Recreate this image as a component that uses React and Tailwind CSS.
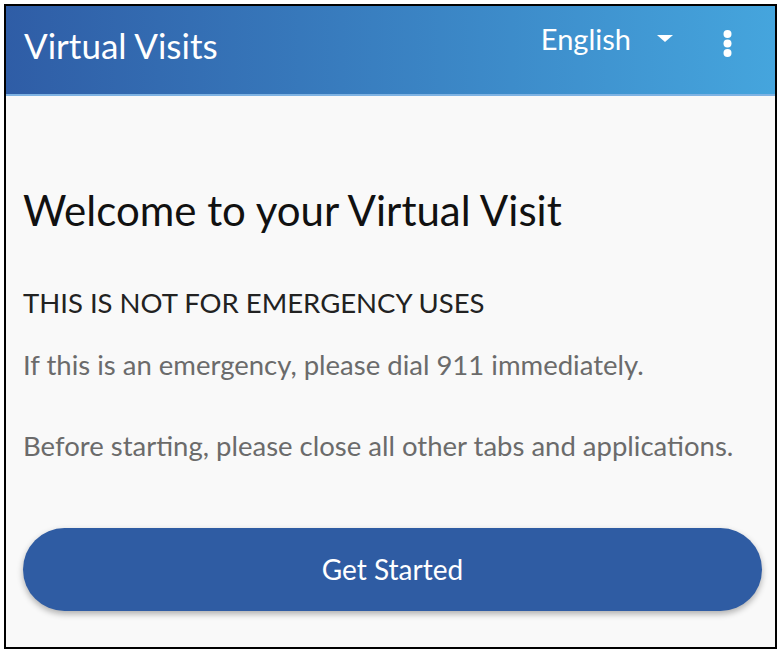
export default function App() {
    return (
        <div className="w-[782px] h-[654px] bg-white p-[4px]" style={{ fontFamily: 'Lato, "Open Sans", sans-serif' }}>
            <div className="w-[773px] h-[645px] border-2 border-black bg-[#f9f9f9] flex flex-col">
                <header className="h-[90px] flex items-start justify-between pl-[18px] pr-[43px] bg-gradient-to-r from-[#2f5da6] to-[#45a5dd] border-b-2 border-[#7fb3e3]">
                    <h1 className="mt-[22px] text-[35px] leading-none text-white">Virtual Visits</h1>
                    <div className="flex items-start text-white">
                        <span className="mt-[18px] text-[29px] leading-none">English</span>
                        <svg width="16" height="7" viewBox="0 0 16 7" className="mt-[29px] ml-[26px]">
                            <path d="M0 0 L16 0 L8 7 Z" fill="white" />
                        </svg>
                        <svg width="9" height="27" viewBox="0 0 9 27" className="mt-[24px] ml-[50px]">
                            <circle cx="4.5" cy="4" r="4" fill="white" />
                            <circle cx="4.5" cy="13.5" r="4" fill="white" />
                            <circle cx="4.5" cy="23" r="4" fill="white" />
                        </svg>
                    </div>
                </header>

                <main className="flex-1 px-[17px] pt-[93px]">
                    <h2 className="text-[42px] text-[#111] leading-none">Welcome to your Virtual Visit</h2>
                    <p className="mt-[58px] text-[27.5px] text-[#222] leading-none">THIS IS NOT FOR EMERGENCY USES</p>
                    <p className="mt-[34px] text-[27.5px] text-[#6b6b6b] leading-none">If this is an emergency, please dial 911 immediately.</p>
                    <p className="mt-[54px] text-[27.5px] text-[#6b6b6b] leading-none">Before starting, please close all other tabs and applications.</p>
                    <button className="mt-[68px] w-[739px] h-[83px] rounded-full bg-[#2f5ca3] text-white text-[28px] shadow-[0_3px_6px_rgba(0,0,0,0.3)]">
                        Get Started
                    </button>
                </main>
            </div>
        </div>
    );
}
